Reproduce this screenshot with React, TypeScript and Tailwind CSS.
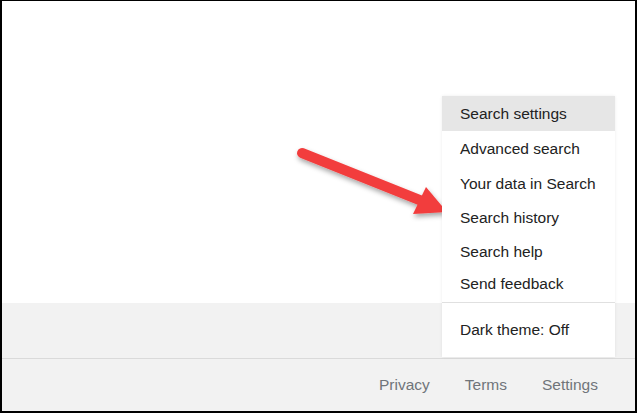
const menuItems = [
  { label: "Search settings", h: "h-[35px]", active: true },
  { label: "Advanced search", h: "h-[35px]" },
  { label: "Your data in Search", h: "h-[35px]" },
  { label: "Search history", h: "h-[34px]" },
  { label: "Search help", h: "h-[34px]" },
  { label: "Send feedback", h: "h-[30px]" },
];

const footerLinks = ["Privacy", "Terms", "Settings"];

function Arrow() {
  return (
    <svg
      className="absolute left-[288px] top-[139px]"
      width="170"
      height="95"
      viewBox="0 0 170 95"
    >
      <defs>
        <filter id="shadow" x="-20%" y="-20%" width="140%" height="160%">
          <feDropShadow dx="1" dy="3" stdDeviation="2.5" floodColor="#000" floodOpacity="0.35" />
        </filter>
      </defs>
      <g filter="url(#shadow)">
        <line x1="12" y1="13" x2="132" y2="61" stroke="#f23d3d" strokeWidth="10" strokeLinecap="round" />
        <polygon points="136,47 157,72 123,74" fill="#f23d3d" />
      </g>
    </svg>
  );
}

export default function App() {
  return (
    <div
      className="relative w-[637px] h-[413px] overflow-hidden border-t border-l-2 border-r-2 border-b-2 border-black bg-white"
      style={{ fontFamily: '"Liberation Sans", Arial, sans-serif' }}
    >
      <div className="flex flex-col h-full">
        <div className="h-[302px] bg-white" />
        <div className="flex-1 flex flex-col bg-[#f2f2f2]">
          <div className="h-[56px] border-b border-[#dadada]" />
          <div className="flex-1 flex items-center justify-end gap-[35px] pr-[37px] text-[15.5px] text-[#70757a]">
            {footerLinks.map((link) => (
              <span key={link}>{link}</span>
            ))}
          </div>
        </div>
      </div>

      <Arrow />

      <div className="absolute left-[440px] top-[95px] w-[173px] bg-white shadow-[0_0_3px_rgba(0,0,0,0.08)] text-[15.5px] text-[#222]">
        {menuItems.map((item) => (
          <div
            key={item.label}
            className={`flex items-center pl-[18px] ${item.h} ${item.active ? "bg-[#e6e6e6]" : ""}`}
          >
            {item.label}
          </div>
        ))}
        <div className="h-[3px]" />
        <div className="border-t border-[#e0e0e0] h-[55px] flex items-center pl-[18px]">
          Dark theme: Off
        </div>
      </div>
    </div>
  );
}
